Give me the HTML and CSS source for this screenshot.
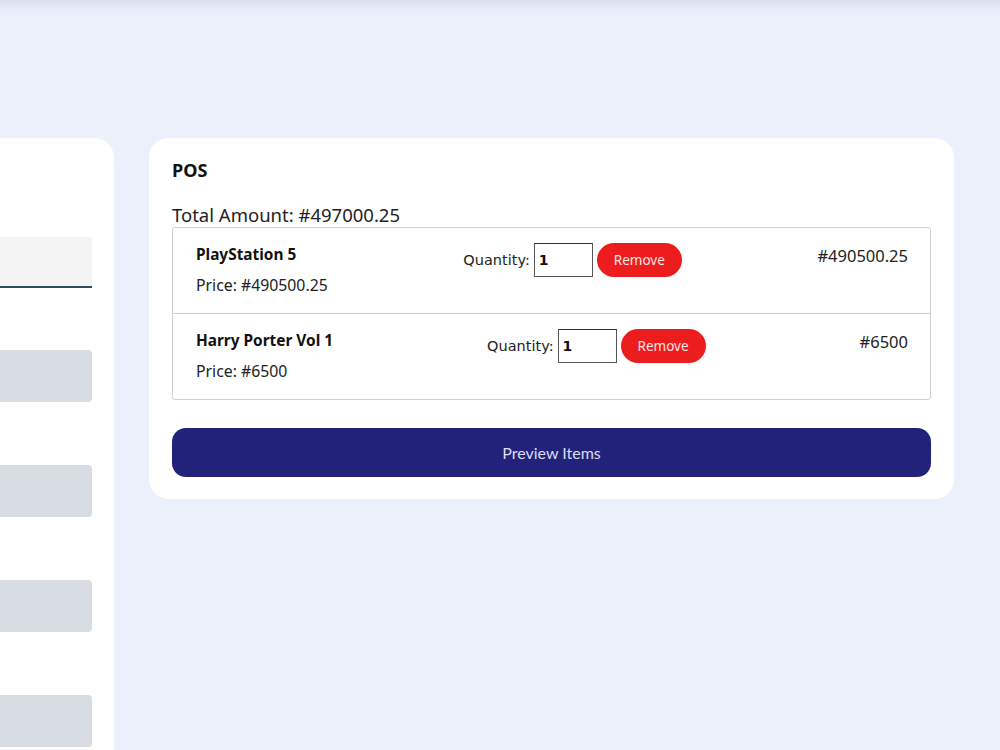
FILE: index.html
```html
<!DOCTYPE html>
<html lang="en">
<head>
<meta charset="utf-8">
<title>POS</title>
<link rel="stylesheet" href="styles.css">
</head>
<body>
<div class="topbar"></div>
<main class="layout">
  <aside class="side-card">
    <div class="search-field"></div>
    <div class="side-list">
      <div class="side-item"></div>
      <div class="side-item"></div>
      <div class="side-item"></div>
      <div class="side-item"></div>
    </div>
  </aside>
  <section class="pos-card">
    <h2 class="pos-title">POS</h2>
    <p class="pos-total">Total Amount: #497000.25</p>
    <div class="cart">
      <div class="cart-row">
        <div class="item-info">
          <div class="item-name">PlayStation 5</div>
          <div class="item-price">Price: #490500.25</div>
        </div>
        <div class="item-qty">
          <label class="qty-label">Quantity:</label>
          <input class="qty-input" type="text" value="1">
          <button class="remove-btn">Remove</button>
        </div>
        <div class="item-sum">#490500.25</div>
      </div>
      <div class="cart-row">
        <div class="item-info">
          <div class="item-name">Harry Porter Vol 1</div>
          <div class="item-price">Price: #6500</div>
        </div>
        <div class="item-qty">
          <label class="qty-label">Quantity:</label>
          <input class="qty-input" type="text" value="1">
          <button class="remove-btn">Remove</button>
        </div>
        <div class="item-sum">#6500</div>
      </div>
    </div>
    <button class="preview-btn">Preview Items</button>
  </section>
</main>
</body>
</html>
```

FILE: styles.css
```css
* { box-sizing: border-box; }
html, body { margin: 0; padding: 0; }
body {
  background: #ecf0fb;
  font-family: "Noto Sans", Lato, sans-serif;
  color: #1b1b1b;
  height: 750px;
  overflow: hidden;
}
.topbar {
  height: 14px;
  background: linear-gradient(to bottom, #d9deec 0%, #e6eaf7 50%, #ecf0fb 100%);
}
.layout {
  display: flex;
  align-items: flex-start;
  padding-top: 124px;
  gap: 35px;
}
.side-card {
  width: 114px;
  height: 640px;
  background: #ffffff;
  border-radius: 0 20px 0 0;
  padding: 99px 22px 0 0;
}
.search-field {
  height: 51px;
  background: #f4f4f4;
  border-bottom: 2px solid #2f4d5c;
}
.side-list {
  display: flex;
  flex-direction: column;
  gap: 63px;
  margin-top: 62px;
}
.side-item {
  height: 52px;
  background: #d8dce3;
  border-radius: 0 4px 4px 0;
}
.pos-card {
  width: 805px;
  background: #ffffff;
  border-radius: 20px;
  padding: 20px 23px 22px 23px;
}
.pos-title {
  margin: 0;
  font-size: 18px;
  line-height: 24px;
  font-weight: 700;
  color: #111;
}
.pos-total {
  margin: 22px 0 1px 0;
  font-size: 18.5px;
  line-height: 22px;
  color: #222;
}
.cart {
  border: 1px solid #cfcfcf;
  border-radius: 3px;
}
.cart-row {
  display: flex;
  justify-content: space-between;
  align-items: flex-start;
  height: 85px;
  padding: 16px 22px 0 23px;
}
.cart-row + .cart-row {
  height: 86px;
  border-top: 1px solid #cfcfcf;
}
.item-name {
  font-size: 15.4px;
  line-height: 22px;
  font-weight: 700;
  color: #111;
}
.item-price {
  margin-top: 8px;
  font-size: 15.8px;
  line-height: 22px;
  color: #222;
}
.item-qty {
  display: flex;
  align-items: center;
  gap: 4px;
  margin-top: -1px;
}
.qty-label {
  font-family: "DejaVu Sans", sans-serif;
  font-size: 14.5px;
  color: #222;
}
.qty-input {
  width: 59px;
  height: 34px;
  border: 1px solid #555;
  border-top-color: #333;
  padding: 0 4px;
  font-family: "DejaVu Sans", sans-serif;
  font-size: 14px;
  font-weight: 700;
  color: #111;
  background: #fff;
}
.remove-btn {
  width: 85px;
  height: 34px;
  border: none;
  border-radius: 17px;
  background: #ee1d1d;
  color: #fbe3e3;
  font-family: "Noto Sans", sans-serif;
  font-size: 13.5px;
}
.item-sum {
  font-size: 16.5px;
  line-height: 24px;
  color: #222;
}
.preview-btn {
  display: block;
  width: 100%;
  height: 49px;
  margin-top: 28px;
  border: none;
  border-radius: 14px;
  background: #22227a;
  color: #dcdcf2;
  font-family: Lato, sans-serif;
  font-size: 16px;
}
```
